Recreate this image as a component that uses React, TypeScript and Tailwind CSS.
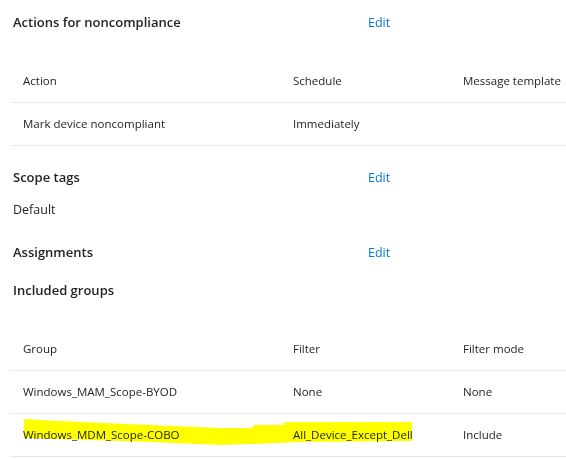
export default function App() {
  const font = { fontFamily: '"Segoe UI", "Open Sans", sans-serif' }
  return (
    <div style={font} className="relative w-[566px] h-[459px] overflow-hidden bg-white text-[#252423]">
      {/* Actions for noncompliance */}
      <SectionHeader title="Actions for noncompliance" className="h-[44px] pt-[2px]" />

      <div className="mt-[16px] ml-[10px]">
        <Row cells={["Action", "Schedule", "Message template"]} />
        <Row cells={["Mark device noncompliant", "Immediately", ""]} />
      </div>

      {/* Scope tags */}
      <SectionHeader title="Scope tags" className="mt-[14px] h-[34px] pt-[2px]" />
      <div className="flex h-[32px] items-center pl-[13px] text-[12.5px]">Default</div>

      {/* Assignments */}
      <SectionHeader title="Assignments" className="mt-[10px] h-[32px] pt-[2px]" />
      <div className="mt-[6px] flex h-[32px] items-center pl-[13px] pt-[2px] text-[13px] font-semibold">
        Included groups
      </div>

      <div className="mt-[22px] ml-[10px]">
        <Row cells={["Group", "Filter", "Filter mode"]} />
        <Row cells={["Windows_MAM_Scope-BYOD", "None", "None"]} />
        <Row cells={["Windows_MDM_Scope-COBO", "All_Device_Except_Dell", "Include"]} />
      </div>

      {/* yellow marker highlight */}
      <svg
        className="pointer-events-none absolute left-0 top-0 mix-blend-multiply"
        width="566"
        height="459"
        viewBox="0 0 566 459"
      >
        <polygon
          fill="#ffff00"
          points="24,419 60,421 150,425 220,428 252,428 254,425 283,425 285,422 412,422 412,441 300,442 252,444 220,445 150,442 60,439 24,438"
        />
      </svg>
    </div>
  )
}

function SectionHeader({ title, className = "" }: { title: string; className?: string }) {
  return (
    <div className={`flex items-center pl-[13px] ${className}`}>
      <div className="w-[355px] shrink-0 text-[13px] font-semibold">{title}</div>
      <a className="text-[12.5px] text-[#0078d4]">Edit</a>
    </div>
  )
}

function Row({ cells }: { cells: string[] }) {
  return (
    <div className="flex h-[43px] items-center border-b border-[#e8e8e8] text-[11.5px]">
      <div className="w-[270px] shrink-0 pl-[13px]">{cells[0]}</div>
      <div className="w-[170px] shrink-0 pl-[13px]">{cells[1]}</div>
      <div className="flex-1 whitespace-nowrap pl-[13px]">{cells[2]}</div>
    </div>
  )
}
